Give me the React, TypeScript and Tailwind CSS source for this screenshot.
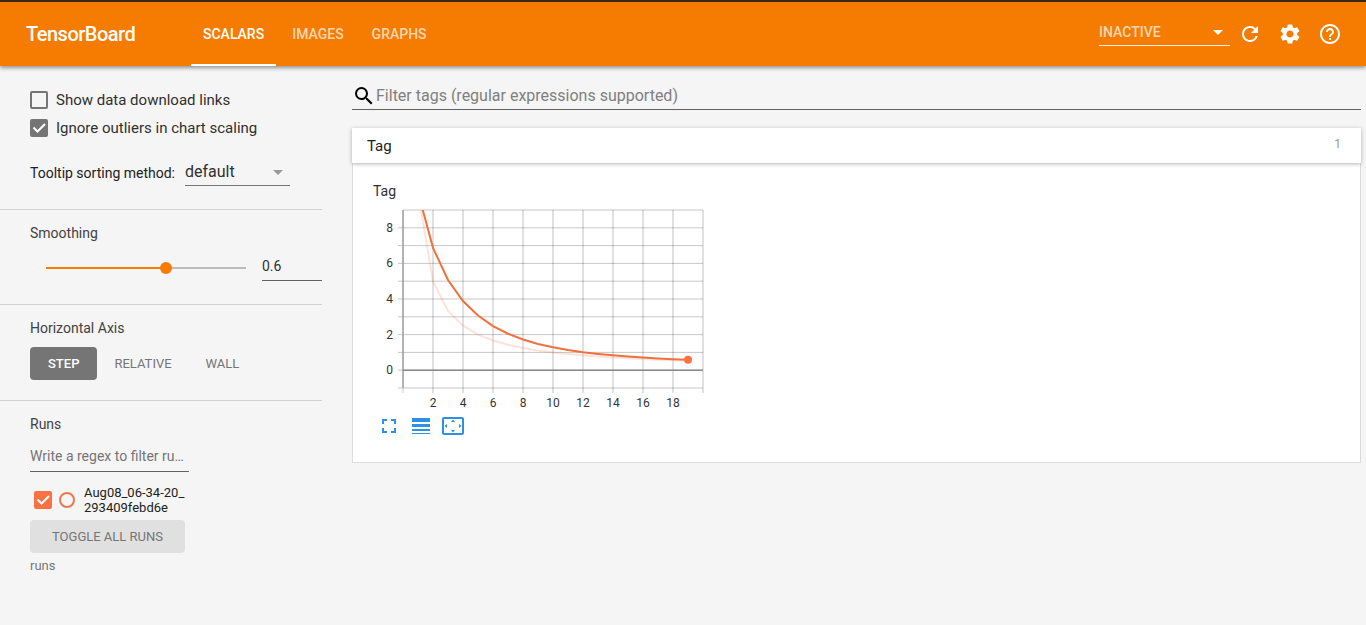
import React, { useState } from 'react';
import {
  MdArrowDropDown,
  MdFullscreen,
  MdHelpOutline,
  MdLineWeight,
  MdRefresh,
  MdSearch,
  MdSettings,
  MdSettingsOverscan,
} from 'react-icons/md';

const TABS = ['SCALARS', 'IMAGES', 'GRAPHS'];
const AXES = ['STEP', 'RELATIVE', 'WALL'];

const STEPS = Array.from({ length: 19 }, (_, i) => i + 1);

// debiased exponential moving average
function smooth(values: number[], weight: number) {
  let last = 0;
  return values.map((v, i) => {
    last = last * weight + (1 - weight) * v;
    return last / (1 - Math.pow(weight, i + 1));
  });
}

const px = (step: number) => 30 + step * 15;
const py = (value: number) => 166.2 - value * 17.8;

function toPoints(values: number[]) {
  return values.map((v, i) => `${px(STEPS[i])},${py(v)}`).join(' ');
}

function ScalarChart({ smoothing }: { smoothing: number }) {
  const raw = STEPS.map((s) => 10 / s);
  const smoothed = smooth(raw, Math.min(smoothing, 0.999));
  const rows = [-1, 0, 1, 2, 3, 4, 5, 6, 7, 8, 9];
  const cols = [2, 4, 6, 8, 10, 12, 14, 16, 18, 20];

  return (
    <svg width="340" height="206" viewBox="0 0 340 206" role="img" aria-label="Tag chart">
      <defs>
        <clipPath id="plot">
          <rect x="30" y="6" width="300" height="178" />
        </clipPath>
      </defs>
      {rows.map((r) => (
        <line key={r} x1={r === 9 ? 30 : 25} x2="330" y1={py(r)} y2={py(r)} stroke="#000" strokeOpacity="0.22" />
      ))}
      {cols.map((c) => (
        <line key={c} x1={px(c)} x2={px(c)} y1="6" y2="189" stroke="#000" strokeOpacity="0.12" strokeWidth="2" />
      ))}
      <line x1="30" x2="30" y1="184" y2="189" stroke="#ccc" />
      <line x1="30" x2="30" y1="6" y2="184" stroke="#999" strokeWidth="1.5" />
      <line x1="30" x2="330" y1={py(0)} y2={py(0)} stroke="#888" strokeWidth="1.5" />
      <g clipPath="url(#plot)" fill="none" stroke="#ff7043" strokeWidth="2">
        <polyline points={toPoints(raw)} strokeOpacity="0.2" />
        <polyline points={toPoints(smoothed)} stroke="#f0703f" />
      </g>
      <circle cx={px(19)} cy={py(smoothed[18])} r="4" fill="#ff7043" />
      <g fontSize="12" fill="#333">
        {[0, 2, 4, 6, 8].map((v) => (
          <text key={v} x="20" y={py(v) + 4} textAnchor="end">{v}</text>
        ))}
        {cols.slice(0, -1).map((c) => (
          <text key={c} x={px(c)} y="203" textAnchor="middle">{c}</text>
        ))}
      </g>
    </svg>
  );
}

type CheckProps = {
  id: string;
  checked: boolean;
  onChange: (v: boolean) => void;
  label?: string;
  tone?: string;
};

function Check({ id, checked, onChange, label, tone }: CheckProps) {
  return (
    <span className="grid size-[18px] shrink-0 place-items-center">
      <input
        id={id}
        type="checkbox"
        aria-label={label}
        checked={checked}
        onChange={(e) => onChange(e.target.checked)}
        className={`col-start-1 row-start-1 size-[18px] appearance-none rounded-xs border-2 ${
          tone || 'border-[#757575] checked:bg-[#757575]'
        }`}
      />
      {checked && (
        <svg viewBox="0 0 18 18" className="pointer-events-none col-start-1 row-start-1 size-[18px]">
          <path d="M3.5 8.5l4 4 7.5-7.5" fill="none" stroke="#fff" strokeWidth="2" />
        </svg>
      )}
    </span>
  );
}

function Header() {
  const [tab, setTab] = useState('SCALARS');

  return (
    <header className="flex h-[66px] items-stretch border-t-2 border-[#3a2a1a] bg-[#f57c00] pl-[26px] pr-6 text-white shadow-[0_2px_4px_rgba(0,0,0,0.4)]">
      <h1 className="w-[165px] self-center text-xl font-medium tracking-tight">TensorBoard</h1>
      <nav className="flex flex-1 gap-1">
        {TABS.map((t) => (
          <button
            key={t}
            onClick={() => setTab(t)}
            className={`border-b-2 px-3 pt-0.5 text-sm font-medium ${
              t === tab ? 'border-white' : 'border-transparent text-white/70'
            }`}
          >
            {t}
          </button>
        ))}
      </nav>
      <div className="flex items-center gap-4">
        <div className="-mr-2 mb-1 grid h-7 w-[131px] items-center border-b border-white/90">
          <select
            aria-label="Inactive dashboards"
            className="col-start-1 row-start-1 w-full appearance-none bg-transparent text-sm font-medium text-white/70"
          >
            <option>INACTIVE</option>
          </select>
          <MdArrowDropDown className="pointer-events-none col-start-1 row-start-1 size-6 justify-self-end" />
        </div>
        <button aria-label="Reload"><MdRefresh className="size-6" /></button>
        <button aria-label="Settings"><MdSettings className="size-6" /></button>
        <button aria-label="Help"><MdHelpOutline className="size-6" /></button>
      </div>
    </header>
  );
}

type SidebarProps = {
  smoothing: number;
  setSmoothing: (v: number) => void;
};

function Sidebar({ smoothing, setSmoothing }: SidebarProps) {
  const [links, setLinks] = useState(false);
  const [outliers, setOutliers] = useState(true);
  const [axis, setAxis] = useState('STEP');
  const [run, setRun] = useState(true);

  return (
    <aside className="w-[322px] shrink-0 text-sm text-[#424242]">
      <section className="border-b border-[#d2d2d2] pb-[23px] pl-[30px] pt-5 text-[#303030]">
        <div className="flex h-7 items-center gap-2 text-[15px]">
          <Check id="links" checked={links} onChange={setLinks} />
          <label htmlFor="links" className="pt-px">Show data download links</label>
        </div>
        <div className="flex h-7 items-center gap-2 text-[15px]">
          <Check id="outliers" checked={outliers} onChange={setOutliers} />
          <label htmlFor="outliers" className="pt-px">Ignore outliers in chart scaling</label>
        </div>
        <div className="mt-4 flex items-center gap-2.5">
          <label htmlFor="sorting" className="pt-0.5 text-[#212121]">Tooltip sorting method:</label>
          <div className="grid h-7 w-[105px] items-center border-b border-[#757575]">
            <select id="sorting" className="col-start-1 row-start-1 w-full appearance-none bg-transparent text-base leading-6">
              <option>default</option>
              <option>descending</option>
              <option>ascending</option>
              <option>nearest</option>
            </select>
            <MdArrowDropDown className="pointer-events-none col-start-1 row-start-1 size-6 justify-self-end text-[#999]" />
          </div>
        </div>
      </section>

      <section className="border-b border-[#d2d2d2] pb-[23px] pl-[30px] pt-[13px]">
        <label htmlFor="smoothing" className="block leading-5">Smoothing</label>
        <div className="mt-[9px] flex items-center justify-between pl-2.5">
          <div className="grid w-[212px] items-center pt-0.5">
            <div className="col-start-1 row-start-1 mx-1.5 h-0.5 bg-[#bdbdbd]">
              <div className="h-full bg-[#f57c00]" style={{ width: `${smoothing * 100}%` }} />
            </div>
            <input
              id="smoothing"
              type="range"
              min="0"
              max="1"
              step="0.001"
              value={smoothing}
              onChange={(e) => setSmoothing(Number(e.target.value))}
              className="col-start-1 row-start-1 h-3 w-full appearance-none bg-transparent [&::-webkit-slider-thumb]:size-3 [&::-webkit-slider-thumb]:appearance-none [&::-webkit-slider-thumb]:rounded-full [&::-webkit-slider-thumb]:bg-[#f57c00]"
            />
          </div>
          <input
            type="text"
            aria-label="Smoothing value"
            value={smoothing}
            onChange={(e) => setSmoothing(Math.min(1, Math.max(0, Number(e.target.value) || 0)))}
            className="h-[29px] w-[60px] border-b border-[#616161] bg-transparent text-[#303030]"
          />
        </div>
      </section>

      <section className="border-b border-[#d2d2d2] pb-5 pl-[30px] pt-[13px]">
        <h3 className="leading-5">Horizontal Axis</h3>
        <div className="mt-[9px] flex">
          {AXES.map((a) => (
            <button
              key={a}
              onClick={() => setAxis(a)}
              className={`h-[33px] rounded-sm pt-px text-[13px] ${
                a === axis ? 'bg-[#757575] px-[18px] font-medium text-white' : 'px-[17px] text-[#757575]'
              }`}
            >
              {a}
            </button>
          ))}
        </div>
      </section>

      <section className="pl-[30px] pt-[13px]">
        <h3 className="leading-5">Runs</h3>
        <input
          type="text"
          aria-label="Filter runs"
          placeholder="Write a regex to filter runs"
          className="mt-[9px] block h-[29px] w-[159px] border-b border-[#616161] bg-transparent pb-0.5 text-ellipsis placeholder:text-[#757575]"
        />
        <div className="ml-1 mt-[13px] flex items-center">
          <Check
            id="run"
            checked={run}
            onChange={setRun}
            tone="border-[#ff7043] checked:bg-[#ff7043]"
          />
          <button
            aria-label="Show only this run"
            className="ml-[7px] size-4 shrink-0 rounded-full border-2 border-[#f07850]"
          />
          <label htmlFor="run" className="ml-[9px] text-[13px] leading-[15px] text-[#212121]">
            Aug08_06-34-20_<br />293409febd6e
          </label>
        </div>
        <button
          onClick={() => setRun(!run)}
          className="mt-[5px] block h-[33px] w-[155px] rounded-sm bg-[#e0e0e0] pt-px text-[13px] text-[#757575]"
        >
          TOGGLE ALL RUNS
        </button>
        <p className="mt-[3px] text-[13px] leading-5 text-[#757575]">runs</p>
      </section>
    </aside>
  );
}

const App: React.FC = () => {
  const [smoothing, setSmoothing] = useState(0.6);

  return (
    <div className="min-h-screen bg-[#f5f5f5] font-['Roboto',sans-serif]">
      <Header />
      <div className="flex">
        <Sidebar smoothing={smoothing} setSmoothing={setSmoothing} />

        <main className="ml-[30px] mr-[5px] min-w-0 flex-1 pt-4">
          <div className="flex h-7 items-center border-b border-[#616161]">
            <MdSearch className="size-6 shrink-0" />
            <input
              type="text"
              aria-label="Filter tags"
              placeholder="Filter tags (regular expressions supported)"
              className="w-full bg-transparent text-base leading-6 placeholder:text-[#808080]"
            />
          </div>

          <button className="relative mt-[18px] flex h-[35px] w-full items-center justify-between bg-white pl-[15px] pr-5 text-[15px] text-[#212121] shadow-[0_1px_4px_rgba(0,0,0,0.3)]">
            <span className="pt-px">Tag</span>
            <span className="pb-1 text-xs text-[#999]">1</span>
          </button>
          <div className="border border-t-0 border-[#dcdcdc] bg-white pb-6 pl-5 pt-[18px]">
            <h2 className="text-sm leading-5 text-[#303030]">Tag</h2>
            <div className="mt-[3px]">
              <ScalarChart smoothing={smoothing} />
            </div>
            <div className="ml-1 mt-1 flex gap-2 text-[#2f8fe0]">
              <button aria-label="Toggle fullscreen"><MdFullscreen className="size-6" /></button>
              <button aria-label="Toggle log scale"><MdLineWeight className="size-6" /></button>
              <button aria-label="Fit domain to data"><MdSettingsOverscan className="size-6" /></button>
            </div>
          </div>
        </main>
      </div>
    </div>
  );
};

export default App;
